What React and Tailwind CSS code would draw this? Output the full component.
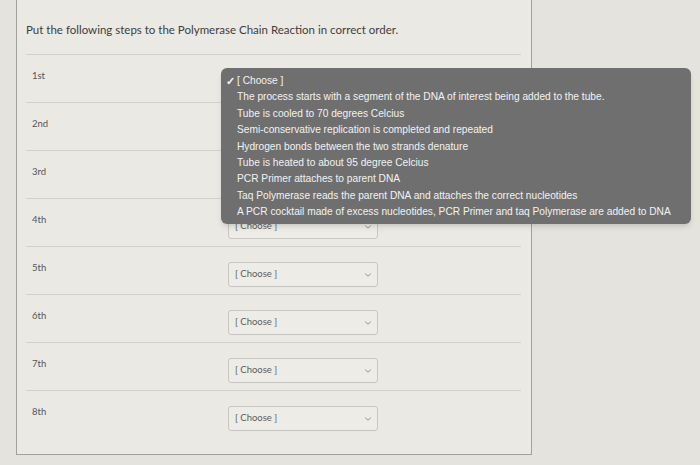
import { ChevronDown } from "lucide-react";

const labels = ["1st", "2nd", "3rd", "4th", "5th", "6th", "7th", "8th"];

const options = [
  "The process starts with a segment of the DNA of interest being added to the tube.",
  "Tube is cooled to 70 degrees Celcius",
  "Semi-conservative replication is completed and repeated",
  "Hydrogen bonds between the two strands denature",
  "Tube is heated to about 95 degree Celcius",
  "PCR Primer attaches to parent DNA",
  "Taq Polymerase reads the parent DNA and attaches the correct nucleotides",
  "A PCR cocktail made of excess nucleotides, PCR Primer and taq Polymerase are added to DNA",
];

// rows under the open menu keep their box but the label is hidden by the menu
function FakeSelect({ hidden }) {
  return (
    <div className="w-[150px] h-[25px] border border-[#c9c7c1] rounded-[3px] bg-[#eeece7] flex items-center justify-between pl-[6px] pr-[4px]">
      <span className="text-[9.5px] text-[#5c5c5c]">{hidden ? "" : "[ Choose ]"}</span>
      <ChevronDown size={10} strokeWidth={2} className="text-[#7a7a7a]" />
    </div>
  );
}

export default function App() {
  return (
    <div
      className="w-[700px] h-[465px] bg-[#e5e3de] overflow-hidden relative"
      style={{ fontFamily: "Lato, 'Liberation Sans', sans-serif" }}
    >
      <div className="ml-[16px] w-[516px] h-[455px] border border-t-0 border-[#a3a19c] bg-[#ebe9e4] pl-[9px] pr-[10px]">
        <p className="pt-[21px] h-[40px] text-[11.5px] text-[#3d3d3d]">
          Put the following steps to the Polymerase Chain Reaction in correct order.
        </p>
        <div className="border-t border-[#d3d1cb] mt-[14px]">
          {labels.map((l, i) => (
            <div
              key={l}
              className={`h-[48px] flex items-start pt-[14px] ${i < 7 ? "border-b border-[#d3d1cb]" : ""}`}
            >
              <span className="w-[202px] pl-[6px] text-[9.5px] text-[#555]">{l}</span>
              <div className="pt-[1px]">
                <FakeSelect hidden={i < 3} />
              </div>
            </div>
          ))}
        </div>
      </div>

      {/* open dropdown over the first select */}
      <div
        className="absolute left-[221px] top-[68px] w-[470px] h-[156px] rounded-[6px] bg-[#6f6f6f] shadow-md pt-[5px] text-[#f2f2f2] text-[10.2px] font-medium leading-[16.4px]"
        style={{ fontFamily: "'Liberation Sans', Arial, sans-serif" }}
      >
        <div className="pl-[5px] flex items-center gap-[2px]">
          <span className="text-[11px] font-bold">✓</span>
          <span>[ Choose ]</span>
        </div>
        {options.map((o) => (
          <div key={o} className="pl-[16px] whitespace-nowrap">
            {o}
          </div>
        ))}
      </div>
    </div>
  );
}
